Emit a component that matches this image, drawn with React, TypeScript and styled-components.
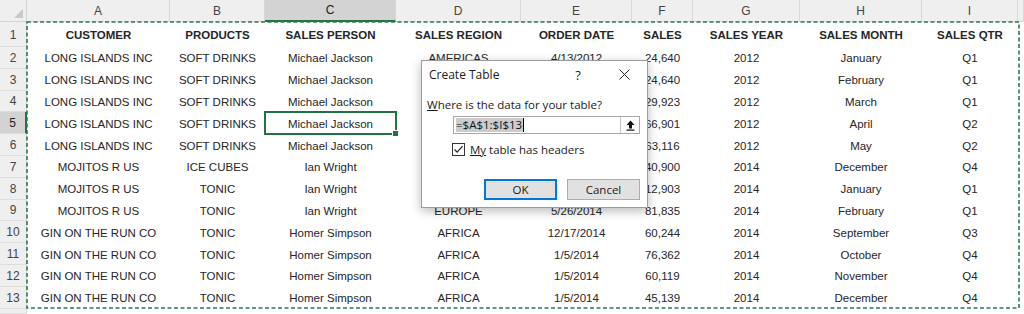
import React from "react";
import styled, { createGlobalStyle, css } from "styled-components";

const GlobalStyle = createGlobalStyle`
  html, body {
    margin: 0;
    padding: 0;
    background: #ffffff;
    overflow: hidden;
  }
`;

const COLS = ["A", "B", "C", "D", "E", "F", "G", "H", "I"];
const WIDTHS = [143, 95, 131, 125, 111, 61, 107, 122, 96];

// cells hidden behind the dialog are left blank (D3:E8)
const ROWS: string[][] = [
  ["CUSTOMER", "PRODUCTS", "SALES PERSON", "SALES REGION", "ORDER DATE", "SALES", "SALES YEAR", "SALES MONTH", "SALES QTR"],
  ["LONG ISLANDS INC", "SOFT DRINKS", "Michael Jackson", "AMERICAS", "4/13/2012", "24,640", "2012", "January", "Q1"],
  ["LONG ISLANDS INC", "SOFT DRINKS", "Michael Jackson", "", "", "24,640", "2012", "February", "Q1"],
  ["LONG ISLANDS INC", "SOFT DRINKS", "Michael Jackson", "", "", "29,923", "2012", "March", "Q1"],
  ["LONG ISLANDS INC", "SOFT DRINKS", "Michael Jackson", "", "", "66,901", "2012", "April", "Q2"],
  ["LONG ISLANDS INC", "SOFT DRINKS", "Michael Jackson", "", "", "63,116", "2012", "May", "Q2"],
  ["MOJITOS R US", "ICE CUBES", "Ian Wright", "", "", "40,900", "2014", "December", "Q4"],
  ["MOJITOS R US", "TONIC", "Ian Wright", "", "", "12,903", "2014", "January", "Q1"],
  ["MOJITOS R US", "TONIC", "Ian Wright", "EUROPE", "5/26/2014", "81,835", "2014", "February", "Q1"],
  ["GIN ON THE RUN CO", "TONIC", "Homer Simpson", "AFRICA", "12/17/2014", "60,244", "2014", "September", "Q3"],
  ["GIN ON THE RUN CO", "TONIC", "Homer Simpson", "AFRICA", "1/5/2014", "76,362", "2014", "October", "Q4"],
  ["GIN ON THE RUN CO", "TONIC", "Homer Simpson", "AFRICA", "1/5/2014", "60,119", "2014", "November", "Q4"],
  ["GIN ON THE RUN CO", "TONIC", "Homer Simpson", "AFRICA", "1/5/2014", "45,139", "2014", "December", "Q4"],
];

const ACTIVE_ROW = 4; // row 5
const ACTIVE_COL = 2; // column C

const Sheet = styled.div`
  position: relative;
  width: 1024px;
  height: 314px;
  overflow: hidden;
  font-family: "Liberation Sans", Arial, sans-serif;
`;

const Grid = styled.div`
  display: grid;
  grid-template-columns: 27px ${WIDTHS.map((w) => `${w}px`).join(" ")} 1fr;
  grid-template-rows: 22px 25px repeat(12, 21.8px) 1fr;
  height: 314px;
`;

const Corner = styled.div`
  position: relative;
  background: #efefef;
  border-right: 1px solid #d4d4d4;
  border-bottom: 1px solid #d4d4d4;
  &::after {
    content: "";
    position: absolute;
    right: 3px;
    bottom: 3px;
    border-left: 9px solid transparent;
    border-bottom: 9px solid #c8c8c8;
  }
`;

const ColHeader = styled.div<{ $sel?: boolean }>`
  display: flex;
  align-items: center;
  justify-content: center;
  background: #efefef;
  color: #444;
  font-size: 12px;
  border-right: 1px solid #d8d8d8;
  border-bottom: 1px solid #d4d4d4;
  box-sizing: border-box;
  ${(p) =>
    p.$sel &&
    css`
      background: #d3d3d3;
      color: #222;
      border-bottom: 2px solid #217346;
    `}
`;

const RowHeader = styled.div<{ $sel?: boolean }>`
  display: flex;
  align-items: center;
  justify-content: center;
  padding-top: 1px;
  background: #efefef;
  color: #444;
  font-size: 12px;
  border-right: 1px solid #d4d4d4;
  border-bottom: 1px solid #dedede;
  box-sizing: border-box;
  ${(p) =>
    p.$sel &&
    css`
      background: #d3d3d3;
      color: #222;
      border-right: 2px solid #217346;
    `}
`;

const Cell = styled.div<{ $bold?: boolean; $active?: boolean }>`
  position: relative;
  display: flex;
  align-items: center;
  justify-content: center;
  padding-top: 1px;
  box-sizing: border-box;
  white-space: nowrap;
  overflow: visible;
  font-size: 11.5px;
  color: #262626;
  font-weight: ${(p) => (p.$bold ? 700 : 400)};
  ${(p) =>
    p.$active &&
    css`
      outline: 2px solid #217346;
      outline-offset: -1px;
      z-index: 1;
    `}
`;

const FillHandle = styled.span`
  position: absolute;
  right: -3px;
  bottom: -3px;
  width: 5px;
  height: 5px;
  background: #217346;
  border: 1px solid #fff;
`;

const Marquee = styled.svg`
  position: absolute;
  left: 26px;
  top: 21px;
  width: 994px;
  height: 288px;
  pointer-events: none;
  z-index: 2;
`;

const Dialog = styled.div`
  position: absolute;
  left: 421px;
  top: 60px;
  width: 227px;
  height: 148px;
  box-sizing: border-box;
  background: #ffffff;
  border: 1px solid #9c9c9c;
  box-shadow: 0 3px 10px rgba(0, 0, 0, 0.28);
  z-index: 5;
  display: flex;
  flex-direction: column;
  font-family: "Open Sans", "Noto Sans", sans-serif;
  font-size: 11.5px;
  color: #1a1a1a;
`;

const TitleBar = styled.div`
  display: flex;
  align-items: center;
  height: 27px;
  padding-left: 7px;
`;

const Title = styled.div`
  flex: 1;
  font-size: 12px;
`;

const TitleButton = styled.div`
  width: 46px;
  height: 27px;
  display: flex;
  align-items: center;
  justify-content: center;
  font-size: 13px;
`;

const Body = styled.div`
  display: flex;
  flex-direction: column;
  padding: 9px 7px 0 5px;
`;

const Prompt = styled.div`
  line-height: 15px;
`;

const Key = styled.span`
  text-decoration: underline;
`;

const RangeBox = styled.div`
  margin: 4px 0 0 26px;
  height: 18px;
  display: flex;
  box-sizing: border-box;
  border: 1px solid #a8a8a8;
`;

const RangeText = styled.div`
  flex: 1;
  display: flex;
  align-items: center;
  padding-left: 2px;
`;

const Selected = styled.span`
  background: #cccccc;
  color: #111;
  line-height: 14px;
  padding-right: 1px;
  border-right: 1px solid #000;
`;

const CollapseButton = styled.div`
  width: 18px;
  display: flex;
  align-items: center;
  justify-content: center;
  border-left: 1px solid #c4c4c4;
  background: #fff;
`;

const CheckRow = styled.label`
  margin: 8px 0 0 25px;
  display: flex;
  align-items: center;
  gap: 5px;
  line-height: 15px;
`;

const CheckBox = styled.span`
  width: 13px;
  height: 13px;
  box-sizing: border-box;
  border: 1px solid #333;
  display: flex;
  align-items: center;
  justify-content: center;
  background: #fff;
`;

const Buttons = styled.div`
  margin-top: 22px;
  display: flex;
  justify-content: flex-end;
  gap: 10px;
`;

const Button = styled.div<{ $default?: boolean }>`
  width: 73px;
  height: 21px;
  box-sizing: border-box;
  display: flex;
  align-items: center;
  justify-content: center;
  background: #e1e1e1;
  border: ${(p) => (p.$default ? "2px solid #0078d7" : "1px solid #adadad")};
`;

function App() {
  return (
    <Sheet>
      <GlobalStyle />
      <Grid>
        <Corner />
        {COLS.map((c, i) => (
          <ColHeader key={c} $sel={i === ACTIVE_COL}>
            {c}
          </ColHeader>
        ))}
        <ColHeader />
        {ROWS.map((row, r) => (
          <React.Fragment key={r}>
            <RowHeader $sel={r === ACTIVE_ROW}>{r + 1}</RowHeader>
            {row.map((v, c) => {
              const active = r === ACTIVE_ROW && c === ACTIVE_COL;
              return (
                <Cell key={c} $bold={r === 0} $active={active}>
                  {v}
                  {active && <FillHandle />}
                </Cell>
              );
            })}
            <Cell />
          </React.Fragment>
        ))}
        <RowHeader />
      </Grid>

      <Marquee viewBox="0 0 994 288">
        <rect
          x="1"
          y="1"
          width="992"
          height="286"
          fill="none"
          stroke="#2d7a4f"
          strokeWidth="1.6"
          strokeDasharray="4 2.5"
        />
      </Marquee>

      <Dialog>
        <TitleBar>
          <Title>Create Table</Title>
          <TitleButton>?</TitleButton>
          <TitleButton>
            <svg width="11" height="11" viewBox="0 0 11 11">
              <path d="M0.5 0.5 L10.5 10.5 M10.5 0.5 L0.5 10.5" stroke="#222" strokeWidth="1" />
            </svg>
          </TitleButton>
        </TitleBar>
        <Body>
          <Prompt>
            <Key>W</Key>here is the data for your table?
          </Prompt>
          <RangeBox>
            <RangeText>
              <Selected>=$A$1:$I$13</Selected>
            </RangeText>
            <CollapseButton>
              <svg width="9" height="11" viewBox="0 0 9 11">
                <path d="M4.5 0.5 L8.5 5 H6 V8.5 H3 V5 H0.5 Z" fill="#111" />
                <rect x="0.5" y="9.5" width="8" height="1.2" fill="#111" />
              </svg>
            </CollapseButton>
          </RangeBox>
          <CheckRow>
            <CheckBox>
              <svg width="11" height="11" viewBox="0 0 11 11">
                <path d="M1.5 5.5 L4.2 8.2 L9.5 2.2" fill="none" stroke="#222" strokeWidth="1.2" />
              </svg>
            </CheckBox>
            <span>
              <Key>My</Key> table has headers
            </span>
          </CheckRow>
          <Buttons>
            <Button $default>OK</Button>
            <Button>Cancel</Button>
          </Buttons>
        </Body>
      </Dialog>
    </Sheet>
  );
}

export default App;
